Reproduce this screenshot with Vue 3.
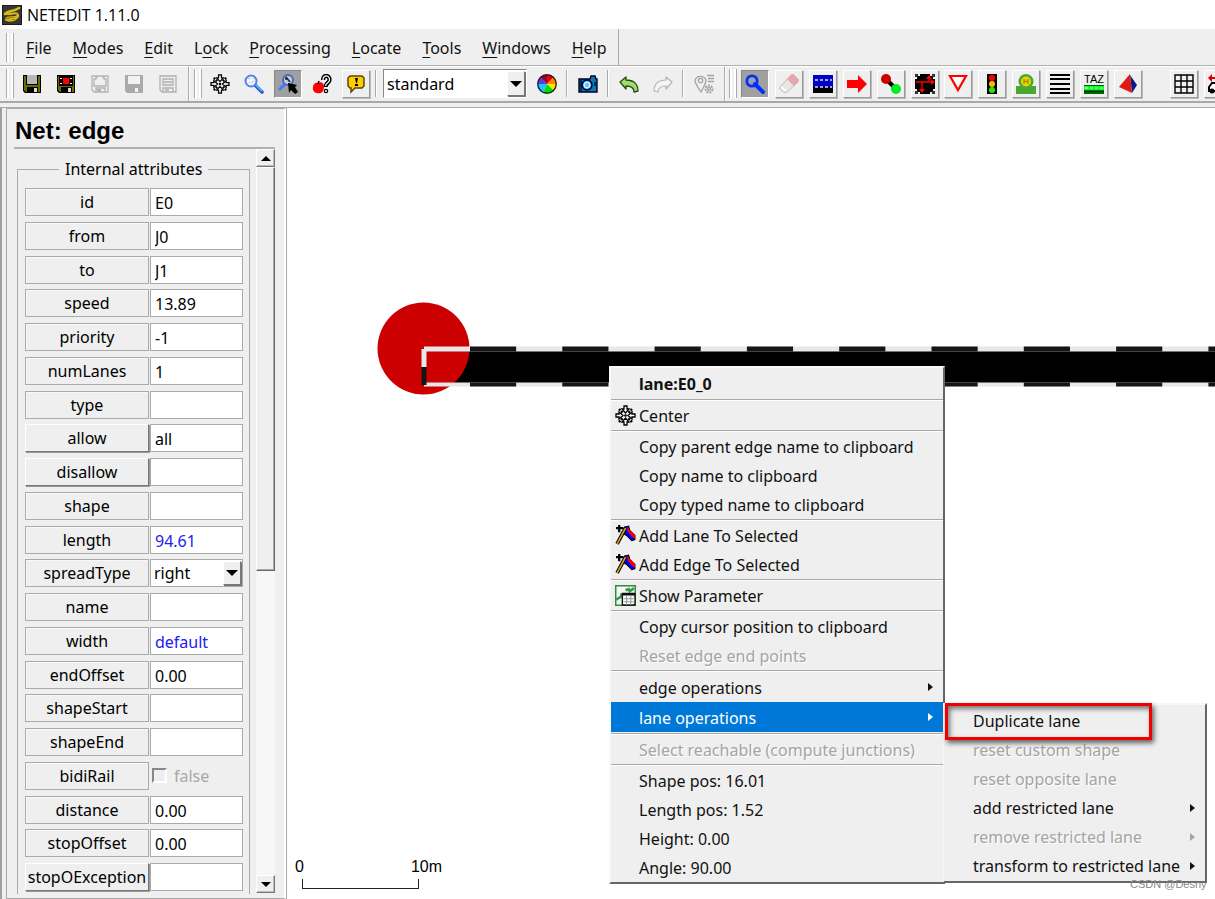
<script setup>
import { ref } from 'vue'

const menus = ['File', 'Modes', 'Edit', 'Lock', 'Processing', 'Locate', 'Tools', 'Windows', 'Help']
const accel = { Lock: 1 }

const fileTools = [
  { icon: 'save', label: 'Save network' },
  { icon: 'save-tls', label: 'Save traffic lights' },
  { icon: 'save-add', label: 'Save additionals', off: true },
  { icon: 'save-demand', label: 'Save demand', off: true },
  { icon: 'save-data', label: 'Save data', off: true }
]
const viewTools = [
  { icon: 'center', label: 'Recenter view' },
  { icon: 'zoom', label: 'Edit viewport' },
  { icon: 'zoom-cursor', label: 'Zoom style', pressed: true },
  { icon: 'locate', label: 'Locate' },
  { icon: 'tooltip', label: 'Show tooltips', raised: true }
]
const modes = [
  { icon: 'inspect', label: 'Inspect', pressed: true },
  { icon: 'eraser', label: 'Delete' },
  { icon: 'select', label: 'Select' },
  { icon: 'move', label: 'Move' },
  { icon: 'edge', label: 'Create edge' },
  { icon: 'connection', label: 'Connections' },
  { icon: 'prohibition', label: 'Prohibitions' },
  { icon: 'tls', label: 'Traffic lights' },
  { icon: 'additional', label: 'Additionals' },
  { icon: 'crossing', label: 'Crossings' },
  { icon: 'taz', label: 'TAZ', caption: 'TAZ' },
  { icon: 'shape', label: 'Shapes' }
]

const attributes = ref([
  { name: 'id', value: 'E0' },
  { name: 'from', value: 'J0' },
  { name: 'to', value: 'J1' },
  { name: 'speed', value: '13.89' },
  { name: 'priority', value: '-1' },
  { name: 'numLanes', value: '1' },
  { name: 'type', value: '' },
  { name: 'allow', value: 'all', dialog: true },
  { name: 'disallow', value: '', dialog: true },
  { name: 'shape', value: '' },
  { name: 'length', value: '94.61', computed: true },
  { name: 'spreadType', value: 'right', kind: 'select' },
  { name: 'name', value: '' },
  { name: 'width', value: 'default', computed: true },
  { name: 'endOffset', value: '0.00' },
  { name: 'shapeStart', value: '' },
  { name: 'shapeEnd', value: '' },
  { name: 'bidiRail', value: false, kind: 'check' },
  { name: 'distance', value: '0.00' },
  { name: 'stopOffset', value: '0.00' },
  { name: 'stopOException', value: '', dialog: true }
])

const laneMenu = [
  [{ text: 'lane:E0_0', title: true }],
  [{ text: 'Center', icon: 'center' }],
  [{ text: 'Copy parent edge name to clipboard' }, { text: 'Copy name to clipboard' }, { text: 'Copy typed name to clipboard' }],
  [{ text: 'Add Lane To Selected', icon: 'flag' }, { text: 'Add Edge To Selected', icon: 'flag' }],
  [{ text: 'Show Parameter', icon: 'table' }],
  [{ text: 'Copy cursor position to clipboard' }, { text: 'Reset edge end points', off: true }],
  [{ text: 'edge operations', sub: true }, { text: 'lane operations', sub: true, active: true }],
  [{ text: 'Select reachable (compute junctions)', off: true }],
  [{ text: 'Shape pos: 16.01' }, { text: 'Length pos: 1.52' }, { text: 'Height: 0.00' }, { text: 'Angle: 90.00' }]
]
const laneOps = [
  { text: 'Duplicate lane' },
  { text: 'reset custom shape', off: true },
  { text: 'reset opposite lane', off: true },
  { text: 'add restricted lane', sub: true },
  { text: 'remove restricted lane', sub: true, off: true },
  { text: 'transform to restricted lane', sub: true }
]
</script>

<template>
  <svg class="defs" aria-hidden="true">
    <symbol id="i-save" viewBox="0 0 20 20">
      <path d="M1 1h18v18H3l-2-2z" fill="#000" /><path d="M2 2h16v16H4l-2-2z" fill="#6b6b00" />
      <path d="M4 1h12v10H4z" fill="#000" /><path d="M5 1h10v9H5z" fill="#b8b8b8" />
      <path d="M5 13h11v6H5z" fill="#000" /><path d="M12 14h3v4h-3z" fill="#ddd" />
    </symbol>
    <symbol id="i-save-tls" viewBox="0 0 20 20">
      <path d="M1 1h18v18H3l-2-2z" fill="#000" /><path d="M2 2h16v16H4l-2-2z" fill="#6b6b00" />
      <path d="M3 2h14v10H3z" fill="#000" /><path d="M7 4h6v6H7z" fill="#f00" />
      <path d="M4 4h2v1H4zM4 9h2v1H4zM14 4h2v1h-2zM14 9h2v1h-2z" fill="#fff" />
      <path d="M5 13h11v6H5z" fill="#000" /><path d="M12 14h3v4h-3z" fill="#ddd" />
    </symbol>
    <symbol id="i-save-add" viewBox="0 0 20 20">
      <path d="M2 2h4v3H4v7h12V5h-2V2h4v16H4l-2-2zM7 4V2h6v2M6 18v-4h9v4" fill="none" stroke="#b4b4b4" stroke-width="1.300" />
      <path d="M7 15h4v3H7z" fill="#b4b4b4" />
    </symbol>
    <symbol id="i-save-demand" viewBox="0 0 20 20">
      <path d="M1 1h18v18H3l-2-2z" fill="#aaa" /><path d="M4 2h12v8H4z" fill="#f2f2f2" />
      <path d="M11 14h3v4h-3z" fill="#f2f2f2" />
    </symbol>
    <symbol id="i-save-data" viewBox="0 0 20 20">
      <path d="M2 2h16v16H4l-2-2zM5 5h10v6H5zM5 18v-4h10v4" fill="none" stroke="#b0b0b0" stroke-width="1.300" />
      <path d="M6 8h8M7 16h4" stroke="#b0b0b0" stroke-width="1.500" />
    </symbol>
    <symbol id="i-center" viewBox="0 0 21 21">
      <path d="M4 4l4 4M17 4l-4 4M4 17l4-4M17 17l-4-4" stroke="#000" stroke-width="2.400" stroke-dasharray="2 1" />
      <g fill="#fff" stroke="#000" stroke-width="1.300">
        <path d="M9 1h3v3h2l-3.500 4L7 4h2z" /><path d="M9 20h3v-3h2l-3.500-4L7 17h2z" />
        <path d="M1 9v3h3v2l4-3.500L4 7v2z" /><path d="M20 9v3h-3v2l-4-3.500L17 7v2z" />
      </g>
      <circle cx="10.500" cy="10.500" r="1.300" fill="#000" />
    </symbol>
    <symbol id="i-zoom" viewBox="0 0 20 20">
      <path d="M11 11l7 7" stroke="#3158d8" stroke-width="3.600" stroke-linecap="round" /><path d="M12 11l6 6" stroke="#5bc3f5" stroke-width="1.500" />
      <circle cx="7" cy="7" r="5.500" fill="#f4f4fa" stroke="#4a86ee" stroke-width="2" />
      <path d="M4 5l2-1M7 9l3-2M5 8l1 1M9 4l1 1" stroke="#b9b9d0" />
    </symbol>
    <symbol id="i-zoom-cursor" viewBox="0 0 20 20">
      <path d="M7 10l-5 5" stroke="#3d7ff0" stroke-width="3" stroke-linecap="round" />
      <circle cx="10" cy="6" r="5" fill="#ccc" stroke="#3e68dc" stroke-width="2" />
      <path d="M8 3l4 5M8 3v3" stroke="#222" stroke-width="1.500" />
      <path d="M10 9l9 2-2 2 3 5-3 2-4-4-2 3z" fill="#000" />
    </symbol>
    <symbol id="i-locate" viewBox="0 0 20 20">
      <path d="M11 6c0-6 7-5 6.500 0 0 3-4 3-4 7" fill="none" stroke="#000" stroke-width="4.200" /><path d="M11 6c0-6 7-5 6.500 0 0 3-4 3-4 6" fill="none" stroke="#fff" stroke-width="1.200" />
      <circle cx="14" cy="17" r="2.300" fill="#000" /><circle cx="14" cy="17" r="1" fill="#fff" />
      <path d="M6 9c3-2 6 0 6 4s-3 7-5 6c-3 1-7-2-6-6 0-3 3-5 5-4z" fill="#f00" /><path d="M6 10l1-3" stroke="#000" stroke-width="1.500" />
    </symbol>
    <symbol id="i-tooltip" viewBox="0 0 20 20">
      <path d="M4 2h12l2 2v8l-2 2H9l-4 4v-4H4l-2-2V4z" fill="#fc0" stroke="#5a4800" stroke-width="1.500" />
      <path d="M9 4h3l-1 5h-1zM9 10h3v2H9z" fill="#000" />
    </symbol>
    <symbol id="i-wheel" viewBox="0 0 20 20">
      <path d="M10 10V0A10 10 0 0 1 17 3z" fill="#e00" /><path d="M10 10L17 3a10 10 0 0 1 3 7z" fill="#ff8a00" />
      <path d="M10 10h10a10 10 0 0 1-3 7z" fill="#ffe600" /><path d="M10 10l7 7a10 10 0 0 1-11 2z" fill="#0d0" />
      <path d="M10 10L6 19a10 10 0 0 1-6-9z" fill="#1ac6ff" /><path d="M10 10H0a10 10 0 0 1 3-7z" fill="#5a39e6" /><path d="M10 10L3 3a10 10 0 0 1 7-3z" fill="#900030" />
      <circle cx="10" cy="10" r="9.200" fill="none" stroke="#222" stroke-width="1.300" />
    </symbol>
    <symbol id="i-camera" viewBox="0 0 20 20">
      <path d="M1 5h11l1-3h4l1 3h1v13H1z" fill="#0878bd" stroke="#002" stroke-width="1.400" />
      <path d="M3 6v11M17 8v4" stroke="#003050" stroke-width="2" />
      <circle cx="9" cy="11" r="5" fill="#2aa6f5" stroke="#002" stroke-width="1.400" /><circle cx="9" cy="11" r="3" fill="#66c8ff" stroke="#fff" />
    </symbol>
    <symbol id="i-undo" viewBox="0 0 20 20">
      <path d="M1 8l6-5v3c8 0 12 4 12 11l-4 1c0-4-3-6-8-6v3z" fill="#a4d870" stroke="#234f0a" stroke-width="1.300" stroke-linejoin="round" />
    </symbol>
    <symbol id="i-redo" viewBox="0 0 20 20">
      <path d="M19 8l-6-5v3C5 6 1 10 1 17l4 1c0-4 3-6 8-6v3z" fill="#f4f4f4" stroke="#b5b5b5" stroke-width="1.200" stroke-linejoin="round" />
    </symbol>
    <symbol id="i-pin" viewBox="0 0 20 20">
      <g fill="none" stroke="#a4a4a4" stroke-width="1.300"><path d="M7 18C4 13 1 10 1 6a6 6 0 0 1 11 0c0 4-2 6-5 12z" /><circle cx="6.500" cy="6.500" r="2.200" />
        <path d="M13 1.500h7M14 4.500h6M14 7.500h6" /><circle cx="15" cy="15" r="3.500" stroke-width="2" stroke-dasharray="2 1" /><circle cx="15" cy="15" r="1.500" /></g>
    </symbol>
    <symbol id="i-inspect" viewBox="0 0 20 20">
      <path d="M10 10l8 8" stroke="#0030ff" stroke-width="4" stroke-linecap="round" /><circle cx="7" cy="7" r="5.200" fill="none" stroke="#0030ff" stroke-width="2.800" />
    </symbol>
    <symbol id="i-eraser" viewBox="0 0 20 20">
      <path d="M1 13L12 1c1-1 2-1 3 0l4 4c1 1 1 2 0 3L8 18c-2 2-8-2-7-5z" fill="#e8e6e6" stroke="#bbb" />
      <path d="M8 5l4-4c1-1 2-1 3 0l4 4c1 1 1 2 0 3l-4 4z" fill="#eaa4ae" /><path d="M2 13l5 4" stroke="#fff" stroke-width="2" />
    </symbol>
    <symbol id="i-select" viewBox="0 0 20 20">
      <path d="M0 1h20v18H0z" fill="#000" /><path d="M0 1h20v12H0z" fill="#0000c8" /><path d="M2 6h3m2 0h3m2 0h3m2 0h2M2 13h3m2 0h3m2 0h3m2 0h2" stroke="#dde" stroke-width="1.500" />
    </symbol>
    <symbol id="i-move" viewBox="0 0 20 20"><path d="M0 6h11V1l9 9-9 9v-5H0z" fill="#f00" /></symbol>
    <symbol id="i-edge" viewBox="0 0 20 20">
      <path d="M5 5l10 10" stroke="#000" stroke-width="4" /><circle cx="5" cy="5" r="5" fill="#c00" /><circle cx="15" cy="15" r="5" fill="#0e2" />
    </symbol>
    <symbol id="i-connection" viewBox="0 0 20 20">
      <path d="M2 2h16v16H2z" fill="#000" /><path d="M0 0h3v3H0zM17 0h3v3h-3zM0 17h3v3H0zM17 17h3v3h-3z" fill="#333" />
      <path d="M5 1h10M5 19h10M1 5v10M19 5v10" stroke="#000" stroke-width="2" />
      <path d="M1 8h17M7 8v10M14 7V3" stroke="#f00" stroke-width="1.300" />
      <path d="M16 5l4 3-4 3zM4 15h6l-3 4zM11 5h6l-3-4z" fill="#f00" />
    </symbol>
    <symbol id="i-prohibition" viewBox="0 0 20 20"><path d="M2 2h16l-8 14z" fill="#fff" stroke="#f00" stroke-width="2.200" /></symbol>
    <symbol id="i-tls" viewBox="0 0 20 20">
      <path d="M5 0h10v20H5z" fill="#000" /><circle cx="10" cy="4" r="3" fill="#f00" /><circle cx="10" cy="10" r="3" fill="#fb0" /><circle cx="10" cy="16" r="3" fill="#2e0" />
    </symbol>
    <symbol id="i-additional" viewBox="0 0 20 20">
      <path d="M0 12h20v8H0z" fill="#48a832" /><circle cx="10" cy="7.500" r="7.500" fill="#48a832" /><circle cx="10" cy="7.500" r="5" fill="#e8d400" />
      <path d="M8 5v5m4-5v5M8 7.500h4" stroke="#a88c00" stroke-width="1.300" />
    </symbol>
    <symbol id="i-crossing" viewBox="0 0 20 20"><path d="M0 1h20M0 5h20M0 10h20M0 15h20M0 19h20" stroke="#000" stroke-width="2" /></symbol>
    <symbol id="i-taz" viewBox="0 0 20 20">
      <path d="M0 11h20v9H0z" fill="#060" /><path d="M0 12h20v5H0z" fill="#0f2" /><path d="M1 14h3m2 0h3m2 0h3m2 0h3" stroke="#fff" /><path d="M0 17h20" stroke="#000" />
    </symbol>
    <symbol id="i-shape" viewBox="0 0 20 20"><path d="M12 1l7 10-5 8z" fill="#0a1a8a" /><path d="M12 0l2 19-13-6z" fill="#e01a10" /></symbol>
    <symbol id="i-grid" viewBox="0 0 20 20"><path d="M1 1h18v18H1zM1 7h18M1 13h18M7 1v18M13 1v18" fill="none" stroke="#000" stroke-width="1.400" /></symbol>
    <symbol id="i-vehicle" viewBox="0 0 20 20">
      <path d="M0 4l4-4v3h6v2H4v3z" fill="#d00" /><path d="M1 17v-4l3-4h9l5 5v3z" fill="#fff" stroke="#000" stroke-width="2" /><circle cx="4" cy="17" r="2.500" />
    </symbol>
    <symbol id="i-flag" viewBox="0 0 20 20">
      <path d="M1 3h7M4 0v7" stroke="#000" stroke-width="2.200" />
      <path d="M9 2l4-1 1 4 5 5v4l-3 1-5-5-3-2z" fill="#00f" stroke="#000" /><path d="M12 1l2 4 5 4v4l-3-2-4-5z" fill="#f00" />
      <path d="M10 3L2 18" stroke="#000" stroke-width="3.500" /><path d="M10 3L2 18" stroke="#e0a020" stroke-width="1.600" />
    </symbol>
    <symbol id="i-table" viewBox="0 0 20 20">
      <path d="M.7.700h18.600v18.600H.7z" fill="#f4f8f4" stroke="#2f8a3c" stroke-width="1.400" /><path d="M1 14l5-3V8M10 5l3-1 1 2 4-3" fill="none" stroke="#3b9a49" stroke-width="2.500" />
      <path d="M7 8h12v11H7z" fill="#fff" stroke="#111" stroke-width="1.300" /><path d="M7 9h12" stroke="#111" stroke-width="2" /><path d="M8 13h11M8 16h11M11 10v9M15 10v9" stroke="#999" />
    </symbol>
  </svg>

  <div class="app">
    <header class="titlebar">
      <svg class="logo" viewBox="0 0 20 20" aria-hidden="true">
        <path d="M0 0h20v20H0z" fill="#1c1c1e" /><path d="M1 1h18v18H1z" fill="#363638" />
        <g fill="none" stroke="#d8bc14" stroke-linecap="round"><path d="M3 9C7 5 9 8 17 3" stroke-width="2.600" /><path d="M5 9c6 1 10-3 11 1s-7 3-12 5" stroke-width="2" /><path d="M4 13c5-3 9 1 12-3M6 16c6 0 8-1 10-4" stroke-width="1.300" /></g>
      </svg>
      <span>NETEDIT 1.11.0</span>
    </header>

    <nav class="menubar">
      <i class="grip"></i>
      <button v-for="m in menus" :key="m" type="button">{{ m.slice(0, accel[m] || 0) }}<u>{{ m[accel[m] || 0] }}</u>{{ m.slice((accel[m] || 0) + 1) }}</button>
    </nav>

    <div class="toolbars">
      <div class="bar">
        <i class="grip"></i>
        <button v-for="t in fileTools" :key="t.icon" type="button" class="tool" :disabled="t.off" :aria-label="t.label"><svg><use :href="'#i-' + t.icon" /></svg></button>
      </div>
      <div class="bar">
        <i class="grip"></i>
        <button v-for="t in viewTools" :key="t.icon" type="button" class="tool" :class="{ pressed: t.pressed, raised: t.raised }" :aria-label="t.label"><svg><use :href="'#i-' + t.icon" /></svg></button>
        <i class="rule first"></i>
        <div class="combo scheme">
          <select aria-label="Colouring scheme"><option>standard</option></select><i class="drop"></i>
        </div>
        <button type="button" class="tool" aria-label="Edit colouring"><svg><use href="#i-wheel" /></svg></button>
        <i class="rule"></i>
        <button type="button" class="tool" aria-label="Make snapshot"><svg><use href="#i-camera" /></svg></button>
        <i class="rule"></i>
        <button type="button" class="tool" aria-label="Undo"><svg><use href="#i-undo" /></svg></button>
        <button type="button" class="tool" aria-label="Redo" disabled><svg><use href="#i-redo" /></svg></button>
        <i class="rule"></i>
        <button type="button" class="tool" aria-label="Compute" disabled><svg><use href="#i-pin" /></svg></button>
      </div>
      <div class="bar last">
        <i class="grip"></i>
        <div class="modes">
          <button v-for="t in modes" :key="t.icon" type="button" class="tool raised" :class="{ pressed: t.pressed }" :aria-label="t.label"><svg><use :href="'#i-' + t.icon" /></svg><span v-if="t.caption" class="caption">{{ t.caption }}</span></button>
        </div>
        <button type="button" class="tool raised grid-toggle" aria-label="Toggle grid"><svg><use href="#i-grid" /></svg></button>
        <button type="button" class="tool raised" aria-label="Draw vehicles"><svg><use href="#i-vehicle" /></svg></button>
      </div>
    </div>

    <main class="workspace">
      <aside class="panel">
        <h1>Net: edge</h1>
        <div class="scroller">
          <fieldset>
            <legend>Internal attributes</legend>
            <div class="rows">
              <div v-for="a in attributes" :key="a.name" class="row">
                <button v-if="a.dialog" type="button" class="name raised">{{ a.name }}</button>
                <label v-else class="name" :for="'f-' + a.name">{{ a.name }}</label>
                <div v-if="a.kind === 'select'" class="combo field">
                  <select :id="'f-' + a.name" v-model="a.value"><option>right</option><option>center</option></select><i class="drop"></i>
                </div>
                <div v-else-if="a.kind === 'check'" class="check">
                  <input :id="'f-' + a.name" v-model="a.value" type="checkbox" disabled><span>false</span>
                </div>
                <input v-else :id="'f-' + a.name" v-model="a.value" class="field" :class="{ computed: a.computed }" type="text" :aria-label="a.name">
              </div>
            </div>
          </fieldset>
          <div class="scrollbar">
            <button type="button" aria-label="Scroll up"><i class="up"></i></button>
            <div class="track"><div class="thumb"></div></div>
            <button type="button" aria-label="Scroll down"><i class="down"></i></button>
          </div>
        </div>
      </aside>

      <section class="canvas">
        <svg class="network" aria-label="Road network">
          <rect x="137" y="240" width="2000" height="38" fill="#000" />
          <circle cx="136.500" cy="240.500" r="46" fill="#c00" />
          <path d="M137 241H2137" stroke="#e8e8e8" stroke-width="5" /><path d="M137 276.500H2137" stroke="#e8e8e8" stroke-width="4" />
          <path d="M183 241H2137" stroke="#151515" stroke-width="5" stroke-dasharray="46.150" /><path d="M183 276.500H2137" stroke="#151515" stroke-width="4" stroke-dasharray="46.150" />
          <path d="M137 241v18" stroke="#e8e8e8" stroke-width="5" /><path d="M137 259v18" stroke="#151515" stroke-width="5" />
        </svg>
        <div class="scale"><div class="marks"><span>0</span><span>10m</span></div><div class="ruler"></div></div>
      </section>
    </main>

    <div class="popup lane-menu" role="menu">
      <div v-for="(group, g) in laneMenu" :key="g" class="group">
        <button v-for="it in group" :key="it.text" type="button" role="menuitem" :disabled="it.off" :class="{ title: it.title, sub: it.sub, active: it.active }">
          <svg v-if="it.icon" class="mi"><use :href="'#i-' + it.icon" /></svg>{{ it.text }}
        </button>
      </div>
    </div>
    <div class="popup ops-menu" role="menu">
      <button v-for="it in laneOps" :key="it.text" type="button" role="menuitem" :disabled="it.off" :class="{ sub: it.sub }">{{ it.text }}</button>
    </div>
    <div class="marker"></div>
    <div class="credit">CSDN @Desny</div>
  </div>
</template>

<style>
body { background: #fff; }
</style>

<style scoped>
* { box-sizing: border-box; }
.defs { position: absolute; width: 0; height: 0; }
.app { position: relative; height: 100vh; min-height: 700px; display: flex; flex-direction: column; overflow: hidden; background: #efefef; color: #000; font: 16px/22px "Noto Sans", sans-serif; }
button, input, select { font: inherit; color: inherit; margin: 0; padding: 0; border: 0; border-radius: 0; background: none; }
button { cursor: default; white-space: nowrap; }

.titlebar { flex: none; height: 29px; padding-left: 2px; display: flex; align-items: center; gap: 5px; background: #fff; font-family: "Open Sans", sans-serif; }
.logo { width: 20px; height: 20px; }

.menubar { flex: none; align-self: flex-start; height: 36px; padding: 1px 11px 0 6px; display: flex; align-items: center; gap: 21px; border: 1px solid #ababab; border-width: 0 1px 0 0; color: #111; }
.menubar .grip { margin-right: -9px; }
.menubar u { text-underline-offset: 3px; }
.grip { flex: none; width: 8px; height: 29px; border: 1px solid #aaa; border-width: 0 1px; background: linear-gradient(90deg, #fff 2px, #efefef 2px 4px, #fff 4px); }

.toolbars { flex: none; height: 38px; display: flex; border-top: 1px solid #b0b0b0; border-bottom: 2px solid #a8a8a8; overflow: hidden; }
.bar { flex: none; display: flex; align-items: center; gap: 6px; padding: 0 6px 1px; border-right: 1px solid #aaa; border-top: 1px solid #fff; }
.bar + .bar { border-left: 1px solid #fff; padding-left: 4px; }
.bar .grip { margin-right: -2px; }
.bar.last { flex: 1 0 auto; border-right: 0; padding-left: 3px; }
.tool { position: relative; flex: none; width: 28px; height: 28px; display: grid; place-items: center; }
.tool svg { width: 20px; height: 20px; }
.caption { position: absolute; left: 0; right: 0; top: 3px; text-align: center; font: 11px/10px "Liberation Sans", sans-serif; }
.raised { border: 1px solid; border-color: #fff #999 #999 #fff; box-shadow: 1px 1px 0 #bbb; }
.pressed { background: #a0a0a0; border: 1px solid; border-color: #888 #fff #fff #888; box-shadow: none; }
.rule { width: 2px; height: 27px; border-left: 1px solid #aaa; background: #fff; margin-left: -1px; }
.modes { width: 401px; display: flex; justify-content: space-between; }
.grid-toggle { margin-left: 22px; }

.combo { position: relative; display: flex; background: #fff; }
.combo select { appearance: none; flex: 1; width: 100%; padding: 0 3px; outline: 0; }
.drop { position: absolute; right: 1px; top: 1px; bottom: 1px; width: 18px; background: #efefef; border: 1px solid; border-color: #fff #777 #777 #fff; box-shadow: 1px 1px 0 #777; pointer-events: none; }
.drop::after { content: ""; position: absolute; left: 2px; top: calc(50% - 3px); border: 6px solid transparent; border-top-color: #000; border-bottom: 0; }
.scheme { width: 144px; height: 29px; border: 1px solid; border-color: #888 #fff #fff #888; }

.workspace { flex: 1; min-height: 0; display: flex; margin-top: 4px; border-left: 2px solid #a0a0a0; border-top: 1px solid #aaa; }
.panel { flex: none; width: 280px; margin-left: 4px; padding: 8px 9px 4px 7px; display: flex; flex-direction: column; border: 1px solid #aaa; border-right: 2px solid #fff; }
h1 { flex: none; margin: 0; height: 32px; padding-left: 1px; border-bottom: 2px solid #b0b0b0; font: bold 24px/28px "Liberation Sans", sans-serif; }
.scroller { flex: 1; min-height: 0; display: flex; justify-content: space-between; }
fieldset { width: 233px; margin: 8px 0 0 3px; padding: 0 6px 3px 7px; min-width: 0; border: 1px solid #aaa; border-bottom: 0; display: flex; flex-direction: column; }
legend { margin-left: 34px; padding: 0 6px; line-height: 24px; }
.rows { height: 100%; padding-top: 7px; display: flex; flex-direction: column; justify-content: space-between; }
.row { display: grid; grid-template-columns: 124px 1fr; gap: 1px; height: 28px; }
.name { display: block; height: 28px; text-align: center; line-height: 27px; border: 1px solid #aaa; box-shadow: inset 1px 1px 0 #f8f8f8; white-space: nowrap; }
.name.raised { border-color: #fff #777 #777 #fff; box-shadow: 1px 1px 0 #999; }
.field { width: 100%; min-width: 0; height: 28px; padding: 2px 4px 0; background: #fff; border: 1px solid #aaa; outline: 0; }
.combo.field { padding: 0; }
.computed { color: #2020f0; }
.check { display: flex; align-items: center; gap: 7px; padding-left: 2px; color: #a8a8a8; }
.check input { appearance: none; width: 15px; height: 15px; border: 2px solid; border-color: #888 #fff #fff #888; }

.scrollbar { width: 19px; display: flex; flex-direction: column; padding-bottom: 1px; }
.scrollbar button { flex: none; height: 18px; display: grid; place-items: center; border: 1px solid; border-color: #fff #777 #777 #fff; box-shadow: inset -1px -1px 0 #bbb; }
.track { flex: 1; background: #f7f7f7; }
.thumb { height: 57%; background: #efefef; border: 1px solid; border-color: #fff #666 #666 #fff; box-shadow: inset -1px -1px 0 #aaa; }
.up, .down { border: 5px solid transparent; }
.up { border-top: 0; border-bottom-color: #000; }
.down { border-bottom: 0; border-top-color: #000; }

.canvas { position: relative; flex: 1; min-width: 0; background: #fff; border-left: 1px solid #aaa; overflow: hidden; }
.network { display: block; width: 100%; height: 100%; }
.scale { position: absolute; left: 8px; bottom: 10px; width: 147px; font: 16px/18px "Liberation Sans", sans-serif; }
.marks { display: flex; justify-content: space-between; }
.ruler { width: 117px; height: 10px; margin: 3px 0 0 7px; border: 1px solid #222; border-top: 0; }

.popup { position: absolute; background: #efefef; border: 2px solid; border-color: #f8f8f8 #666 #666 #f8f8f8; display: flex; flex-direction: column; }
.popup button { position: relative; display: block; width: 100%; height: 29px; padding: 1px 0 0 28px; text-align: left; line-height: 29px; color: #111; }
.popup button.title { height: 31px; line-height: 31px; font-weight: bold; }
.lane-menu button.sub { height: 30px; line-height: 30px; }
.popup button:disabled { color: #a4a4a4; text-shadow: 1px 1px 0 #fff; }
.popup button.active { background: #0078d7; color: #fff; margin-bottom: 1px; }
.popup button.sub::after { content: ""; position: absolute; right: 10px; top: 11px; border: 4px solid transparent; border-left: 5px solid; border-left-color: currentColor; border-right: 0; }
.group + .group { border-top: 1px solid #a8a8a8; box-shadow: inset 0 1px 0 #fff; padding-top: 1px; }
.mi { position: absolute; left: 4px; top: 4px; width: 21px; height: 21px; }
.lane-menu { left: 609px; top: 366px; width: 336px; }
.ops-menu { left: 943px; top: 703px; width: 264px; border-left-width: 1px; padding: 1px 0; }
.popup.ops-menu button { padding-left: 29px; }
.marker { position: absolute; left: 945px; top: 703px; width: 207px; height: 37px; border: 3px solid #f00000; box-shadow: 2px 3px 5px rgba(0,0,0,.6), inset 2px 3px 5px rgba(0,0,0,.5); pointer-events: none; }
.credit { position: absolute; left: 1130px; top: 877px; font: 11px/14px "Liberation Sans", sans-serif; color: #888; white-space: nowrap; }
</style>
